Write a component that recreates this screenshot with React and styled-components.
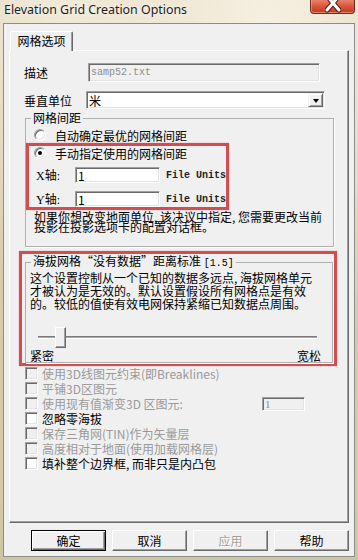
import React from "react";
import styled, { createGlobalStyle } from "styled-components";

const CJK = `"Noto Sans CJK SC", "Noto Sans", sans-serif`;
const MONO = `"Liberation Mono", "DejaVu Sans Mono", monospace`;

const GlobalStyle = createGlobalStyle`
    html, body {
        margin: 0;
        padding: 0;
        background: #d8caae;
    }
    body {
        font-family: ${CJK};
        font-size: 12px;
    }
    #root {
        width: 358px;
        height: 560px;
    }
`;

const Window = styled.div`
    box-sizing: border-box;
    width: 358px;
    height: 560px;
    display: flex;
    flex-direction: column;
    padding: 0 3px 3px 3px;
    background:
        radial-gradient(ellipse at 75% 10%, rgba(250, 245, 233, 0.9), rgba(250, 245, 233, 0) 45%),
        radial-gradient(ellipse at 20% 0%, rgba(245, 238, 222, 0.8), rgba(245, 238, 222, 0) 40%),
        linear-gradient(180deg, #e6dbc4 0%, #d9cbad 40%, #d6c7a6 90%, #c9c7a2 100%);
`;

const TitleBar = styled.div`
    height: 23px;
    flex-shrink: 0;
    display: flex;
    align-items: flex-start;
`;

const Title = styled.div`
    padding: 2px 0 0 1px;
    font-family: "Noto Sans", sans-serif;
    font-size: 12.4px;
    line-height: 16px;
    color: #1e1e1e;
    text-shadow: 0 0 5px rgba(255, 255, 255, 0.9);
    white-space: nowrap;
`;

const CloseButton = styled.div`
    box-sizing: border-box;
    margin-left: auto;
    width: 45px;
    height: 14px;
    border: 1px solid #6e2d20;
    border-top: none;
    border-radius: 0 0 4px 4px;
    background: linear-gradient(180deg, #e9806a 0%, #d6553b 50%, #c23a22 100%);
    box-shadow: inset 0 -1px 0 rgba(255, 200, 180, 0.5), inset 1px 0 0 rgba(255, 200, 180, 0.4);
    overflow: hidden;
    display: flex;
    justify-content: center;
`;

const Client = styled.div`
    flex: 1;
    display: flex;
    flex-direction: column;
    padding: 7px 5px 5px 5px;
    background: #f0f0f0;
    border: 1px solid #8c8c8c;
`;

const TabStrip = styled.div`
    display: flex;
    height: 20px;
    padding-left: 1px;
    margin-bottom: -1px;
    position: relative;
    z-index: 1;
`;

const Tab = styled.div`
    box-sizing: border-box;
    width: 63px;
    height: 20px;
    background: #f0f0f0;
    border-top: 1px solid #ffffff;
    border-left: 1px solid #ffffff;
    border-right: 1px solid #696969;
    box-shadow: inset -1px 0 0 #a0a0a0;
    border-radius: 2px 2px 0 0;
    font-size: 12px;
    line-height: 18px;
    text-align: center;
    color: #000;
`;

const Panel = styled.div`
    box-sizing: border-box;
    width: 340px;
    height: 473px;
    display: flex;
    flex-direction: column;
    align-items: flex-start;
    padding-left: 14px;
    border: 1px solid;
    border-color: #ffffff #696969 #696969 #ffffff;
    box-shadow: inset -1px -1px 0 #a0a0a0;
`;

const FieldRow = styled.div`
    display: flex;
    align-items: center;
    height: ${(p) => p.$h}px;
    margin-top: ${(p) => p.$mt}px;
`;

const FieldLabel = styled.div`
    width: ${(p) => p.$w}px;
    font-size: 12px;
    color: #000;
`;

const Sunken = styled.div`
    box-sizing: border-box;
    height: 100%;
    width: ${(p) => p.$w}px;
    border: 1px solid;
    border-color: #a0a0a0 #ffffff #ffffff #a0a0a0;
    box-shadow: inset 1px 1px 0 #696969, inset -1px -1px 0 #e3e3e3;
    background: ${(p) => (p.$disabled ? "#f0f0f0" : "#ffffff")};
    display: flex;
    align-items: center;
    padding: 0 2px;
    font-family: ${(p) => (p.$mono ? MONO : CJK)};
    font-size: ${(p) => (p.$mono ? 10 : 12)}px;
    color: ${(p) => (p.$disabled ? "#8e8e8e" : "#000")};
    white-space: nowrap;
`;

const DropButton = styled.div`
    box-sizing: border-box;
    margin-left: auto;
    margin-right: -1px;
    width: 15px;
    height: 14px;
    background: #f0f0f0;
    border: 1px solid;
    border-color: #f0f0f0 #696969 #696969 #f0f0f0;
    box-shadow: inset 1px 1px 0 #ffffff, inset -1px -1px 0 #a0a0a0;
    display: flex;
    align-items: center;
    justify-content: center;

    &::after {
        content: "";
        border-left: 3.5px solid transparent;
        border-right: 3.5px solid transparent;
        border-top: 4px solid #000;
        margin-top: 1px;
    }
`;

const Group = styled.fieldset`
    box-sizing: border-box;
    width: ${(p) => p.$w}px;
    margin: ${(p) => p.$mt}px 0 0 ${(p) => p.$ml}px;
    padding: 0 0 ${(p) => p.$pb}px 0;
    border: 1px solid #b0b0b0;
    box-shadow: 1px 1px 0 #ffffff;
    min-width: 0;
`;

const Legend = styled.legend`
    margin-left: 5px;
    padding: 0 2px;
    font-size: 12px;
    line-height: 14px;
    color: #000;
    white-space: nowrap;
`;

const Mono = styled.span`
    font-family: ${MONO};
    font-size: 10px;
`;

const OptionRow = styled.div`
    display: flex;
    align-items: center;
    height: 14px;
    margin-top: ${(p) => p.$mt || 0}px;
    padding-left: ${(p) => p.$pl}px;
    gap: 9px;
    font-size: 12px;
    color: #000;
    white-space: nowrap;
`;

const Radio = styled.span`
    box-sizing: border-box;
    width: 12px;
    height: 12px;
    border-radius: 50%;
    border: 1px solid;
    border-color: #a0a0a0 #ffffff #ffffff #a0a0a0;
    box-shadow: inset 1px 1px 0 #696969, inset -1px -1px 0 #e3e3e3;
    background: #fff;
    display: flex;
    align-items: center;
    justify-content: center;

    &::after {
        content: "";
        width: 4px;
        height: 4px;
        border-radius: 50%;
        background: ${(p) => (p.$checked ? "#000" : "transparent")};
    }
`;

const RedBox = styled.div`
    box-sizing: border-box;
    width: ${(p) => p.$w}px;
    margin: ${(p) => p.$mt}px 0 0 ${(p) => p.$ml}px;
    padding-bottom: ${(p) => p.$pb || 0}px;
    border: 3px solid #d24d50;
    box-shadow: 0 0 1px rgba(210, 77, 80, 0.6);
    display: flex;
    flex-direction: column;
    align-items: flex-start;
`;

const AxisRow = styled.div`
    display: flex;
    align-items: center;
    height: 16px;
    margin-top: ${(p) => p.$mt}px;
    padding-left: 7px;
`;

const AxisLabel = styled.div`
    width: 39px;
    font-family: "Liberation Serif", ${CJK};
    font-size: 12px;
    color: #000;
`;

const Units = styled.div`
    margin-left: 6px;
    font-family: ${MONO};
    font-size: 10px;
    font-weight: bold;
    color: #222;
`;

const Note = styled.div`
    margin-top: ${(p) => p.$mt}px;
    padding-left: ${(p) => p.$pl}px;
    font-size: 12px;
    line-height: ${(p) => p.$lh}px;
    color: #000;
    white-space: nowrap;
`;

const Slider = styled.div`
    position: relative;
    width: 279px;
    height: 21px;
    margin: 17px 0 0 12px;
    display: flex;
    align-items: center;
`;

const Track = styled.div`
    width: 100%;
    height: 3px;
    box-sizing: border-box;
    border-top: 1px solid #7a7a7a;
    border-bottom: 1px solid #ffffff;
    background: #a8a8a8;
`;

const Thumb = styled.div`
    position: absolute;
    left: 17px;
    top: 0;
    box-sizing: border-box;
    width: 11px;
    height: 21px;
    background: #f0f0f0;
    border: 1px solid;
    border-color: #ffffff #696969 #696969 #ffffff;
    box-shadow: inset -1px -1px 0 #a0a0a0;
`;

const SliderLabels = styled.div`
    box-sizing: border-box;
    width: 100%;
    display: flex;
    justify-content: space-between;
    height: 13px;
    margin-top: 1px;
    padding: 0 11px 0 4px;
    font-size: 12px;
    line-height: 13px;
    color: #000;
`;

const CheckRow = styled.div`
    display: flex;
    align-items: center;
    height: 15px;
    margin: ${(p) => p.$mt || 0}px 0 0 1px;
    font-size: 12px;
    color: ${(p) => (p.$disabled ? "#9a9a9a" : "#000")};
    white-space: nowrap;
`;

const Check = styled.span`
    box-sizing: border-box;
    flex-shrink: 0;
    width: 13px;
    height: 13px;
    margin-right: 4px;
    border: 1px solid;
    border-color: #a0a0a0 #ffffff #ffffff #a0a0a0;
    box-shadow: inset 1px 1px 0 #696969, inset -1px -1px 0 #e3e3e3;
    background: ${(p) => (p.$disabled ? "#f0f0f0" : "#ffffff")};
`;

const CheckText = styled.span`
    width: ${(p) => (p.$w ? `${p.$w}px` : "auto")};
`;

const SmallInput = styled(Sunken)`
    height: 14px;
    font-size: 11px;
    font-family: "Liberation Serif", serif;
`;

const ButtonRow = styled.div`
    display: flex;
    justify-content: flex-end;
    gap: 6px;
    margin-top: 7px;
`;

const Button = styled.div`
    box-sizing: border-box;
    width: 75px;
    height: 21px;
    display: flex;
    align-items: center;
    justify-content: center;
    background: #f0f0f0;
    border: 1px solid;
    border-color: ${(p) => (p.$default ? "#000000" : "#ffffff #696969 #696969 #ffffff")};
    box-shadow: ${(p) =>
        p.$default
            ? "inset 1px 1px 0 #ffffff, inset -1px -1px 0 #696969, inset -2px -2px 0 #a0a0a0"
            : "inset -1px -1px 0 #a0a0a0"};
    font-size: 12px;
    color: ${(p) => (p.$disabled ? "#a0a0a0" : "#000")};
    text-shadow: ${(p) => (p.$disabled ? "1px 1px 0 #ffffff" : "none")};
`;

const checks = [
    { text: "使用3D线图元约束(即Breaklines)", disabled: true },
    { text: "平铺3D区图元", disabled: true },
    { text: "使用现有值渐变3D 区图元:", disabled: true, input: "1" },
    { text: "忽略零海拔" },
    { text: "保存三角网(TIN)作为矢量层", disabled: true },
    { text: "高度相对于地面(使用加载网格层)", disabled: true },
    { text: "填补整个边界框, 而非只是内凸包" },
];

export default function App() {
    return (
        <>
            <GlobalStyle />
            <Window lang="zh-CN">
                <TitleBar>
                    <Title>Elevation Grid Creation Options</Title>
                    <CloseButton>
                        <svg width="16" height="13" viewBox="0 0 16 13">
                            <path d="M2 -4 L14 10 M14 -4 L2 10" stroke="#5a1a10" strokeWidth="5" strokeLinecap="round" />
                            <path d="M2 -4 L14 10 M14 -4 L2 10" stroke="#ffffff" strokeWidth="3" strokeLinecap="round" />
                        </svg>
                    </CloseButton>
                </TitleBar>
                <Client>
                    <TabStrip>
                        <Tab>网格选项</Tab>
                    </TabStrip>
                    <Panel>
                        <FieldRow $h={19} $mt={12}>
                            <FieldLabel $w={64}>描述</FieldLabel>
                            <Sunken $w={232} $disabled $mono>samp52.txt</Sunken>
                        </FieldRow>
                        <FieldRow $h={18} $mt={9}>
                            <FieldLabel $w={62}>垂直单位</FieldLabel>
                            <Sunken $w={239}>
                                米
                                <DropButton />
                            </Sunken>
                        </FieldRow>

                        <Group $w={309} $mt={2} $ml={1} $pb={14}>
                            <Legend>网格间距</Legend>
                            <OptionRow $mt={3} $pl={8}>
                                <Radio />
                                自动确定最优的网格间距
                            </OptionRow>
                            <RedBox $w={203} $mt={1} $ml={0}>
                                <OptionRow $pl={5}>
                                    <Radio $checked />
                                    手动指定使用的网格间距
                                </OptionRow>
                                <AxisRow $mt={7}>
                                    <AxisLabel>X轴:</AxisLabel>
                                    <Sunken $w={85}>1</Sunken>
                                    <Units>File Units</Units>
                                </AxisRow>
                                <AxisRow $mt={8}>
                                    <AxisLabel>Y轴:</AxisLabel>
                                    <Sunken $w={85}>1</Sunken>
                                    <Units>File Units</Units>
                                </AxisRow>
                            </RedBox>
                            <Note $mt={2} $pl={8} $lh={10}>
                                如果你想改变地面单位, 该决议中指定, 您需要更改当前
                                <br />
                                投影在投影选项卡的配置对话框。
                            </Note>
                        </Group>

                        <RedBox $w={318} $mt={4} $ml={-5} $pb={0}>
                            <Group $w={308} $mt={0} $ml={3} $pb={0}>
                                <Legend>
                                    海拔网格“没有数据”距离标准 <Mono>[1.5]</Mono>
                                </Legend>
                                <Note $mt={0} $pl={4} $lh={13}>
                                    这个设置控制从一个已知的数据多远点, 海拔网格单元
                                    <br />
                                    才被认为是无效的。默认设置假设所有网格点是有效
                                    <br />
                                    的。较低的值使有效电网保持紧缩已知数据点周围。
                                </Note>
                                <Slider>
                                    <Track />
                                    <Thumb />
                                </Slider>
                                <SliderLabels>
                                    <span>紧密</span>
                                    <span>宽松</span>
                                </SliderLabels>
                            </Group>
                        </RedBox>

                        {checks.map((c, i) => (
                            <CheckRow key={c.text} $mt={i === 0 ? 0 : 0} $disabled={c.disabled}>
                                <Check $disabled={c.disabled} />
                                <CheckText $w={c.input ? 220 : 0}>{c.text}</CheckText>
                                {c.input && (
                                    <SmallInput $w={43} $disabled>
                                        {c.input}
                                    </SmallInput>
                                )}
                            </CheckRow>
                        ))}
                    </Panel>
                    <ButtonRow>
                        <Button $default>确定</Button>
                        <Button>取消</Button>
                        <Button $disabled>应用</Button>
                        <Button>帮助</Button>
                    </ButtonRow>
                </Client>
            </Window>
        </>
    );
}
